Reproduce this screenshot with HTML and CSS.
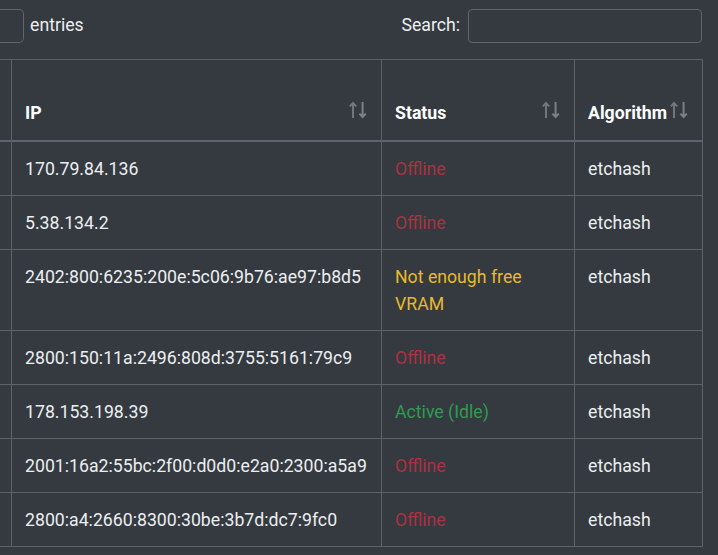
FILE: index.html
```html
<!DOCTYPE html>
<html lang="en">
<head>
<meta charset="utf-8">
<title>Workers</title>
<link rel="stylesheet" href="styles.css">
</head>
<body>
<div class="page">
  <div class="controls">
    <div class="length">
      <div class="select-box"></div>
      <span class="label">entries</span>
    </div>
    <div class="search">
      <span class="label">Search:</span>
      <div class="input"></div>
    </div>
  </div>
  <table class="grid">
    <colgroup>
      <col class="c-cut">
      <col class="c-ip">
      <col class="c-status">
      <col class="c-algo">
    </colgroup>
    <thead>
      <tr>
        <th class="cut"></th>
        <th><div class="th-in"><span>IP</span><svg class="sort" viewBox="0 0 18 18" width="18" height="18"><path class="up" d="M4 17V2M0.8 5.4L4 2l3.2 3.4"/><path class="down" d="M13.6 1v15M10.4 12.6l3.2 3.4 3.2-3.4"/></svg></div></th>
        <th><div class="th-in"><span>Status</span><svg class="sort" viewBox="0 0 18 18" width="18" height="18"><path class="up" d="M4 17V2M0.8 5.4L4 2l3.2 3.4"/><path class="down" d="M13.6 1v15M10.4 12.6l3.2 3.4 3.2-3.4"/></svg></div></th>
        <th><div class="th-in"><span>Algorithm</span><svg class="sort" viewBox="0 0 18 18" width="18" height="18"><path class="up" d="M4 17V2M0.8 5.4L4 2l3.2 3.4"/><path class="down" d="M13.6 1v15M10.4 12.6l3.2 3.4 3.2-3.4"/></svg></div></th>
      </tr>
    </thead>
    <tbody>
      <tr><td class="cut"></td><td>170.79.84.136</td><td class="st-off">Offline</td><td>etchash</td></tr>
      <tr><td class="cut"></td><td>5.38.134.2</td><td class="st-off">Offline</td><td>etchash</td></tr>
      <tr><td class="cut"></td><td>2402:800:6235:200e:5c06:9b76:ae97:b8d5</td><td class="st-warn">Not enough free VRAM</td><td>etchash</td></tr>
      <tr><td class="cut"></td><td>2800:150:11a:2496:808d:3755:5161:79c9</td><td class="st-off">Offline</td><td>etchash</td></tr>
      <tr><td class="cut"></td><td>178.153.198.39</td><td class="st-ok">Active (Idle)</td><td>etchash</td></tr>
      <tr><td class="cut"></td><td>2001:16a2:55bc:2f00:d0d0:e2a0:2300:a5a9</td><td class="st-off">Offline</td><td>etchash</td></tr>
      <tr><td class="cut"></td><td>2800:a4:2660:8300:30be:3b7d:dc7:9fc0</td><td class="st-off">Offline</td><td>etchash</td></tr>
    </tbody>
  </table>
</div>
</body>
</html>
```
FILE: styles.css
```css
html, body {
  margin: 0;
  padding: 0;
  background: #343a40;
}
body {
  font-family: Roboto, "Liberation Sans", Arial, sans-serif;
  font-size: 17.7px;
  line-height: 27px;
  color: #eceef0;
  height: 555px;
  overflow: hidden;
}
.page {
  width: 702px;
  padding-top: 9px;
}
.controls {
  display: flex;
  justify-content: space-between;
  align-items: center;
  height: 34px;
}
.length {
  display: flex;
  align-items: center;
  gap: 6px;
}
.select-box {
  width: 23px;
  height: 32px;
  border: 1px solid #5f656c;
  border-left: none;
  border-radius: 0 5px 5px 0;
}
.search {
  display: flex;
  align-items: center;
  gap: 7px;
}
.input {
  width: 232px;
  height: 32px;
  border: 1px solid #5f656c;
  border-radius: 4px;
}
.label {
  position: relative;
  top: -1px;
}
.search .label {
  left: -1px;
}
.grid {
  margin-top: 16px;
  border-collapse: collapse;
  table-layout: fixed;
  width: 702px;
}
.c-cut { width: 11px; }
.c-ip { width: 370px; }
.c-status { width: 193px; }
.c-algo { width: 128px; }
.grid th, .grid td {
  border: 1px solid #5d636a;
  padding: 13.5px 13.5px 12.5px;
  text-align: left;
  vertical-align: top;
}
.grid .cut {
  padding: 0;
  border-left: none;
}
.grid th {
  height: 54px;
  padding-top: 12.5px;
  padding-bottom: 13.5px;
  vertical-align: bottom;
  font-weight: 700;
  color: #ffffff;
  border-bottom: 2px solid #5d636a;
}
.th-in {
  display: flex;
  justify-content: space-between;
  align-items: flex-start;
}
.sort {
  flex: none;
  margin-top: 1px;
  fill: none;
  stroke-width: 2;
}
.sort .up { stroke: #71767c; }
.sort .down { stroke: #7c8187; }
.st-off { color: #a93341; }
.st-warn { color: #e8b92e; }
.st-ok { color: #2f9b51; }
```
